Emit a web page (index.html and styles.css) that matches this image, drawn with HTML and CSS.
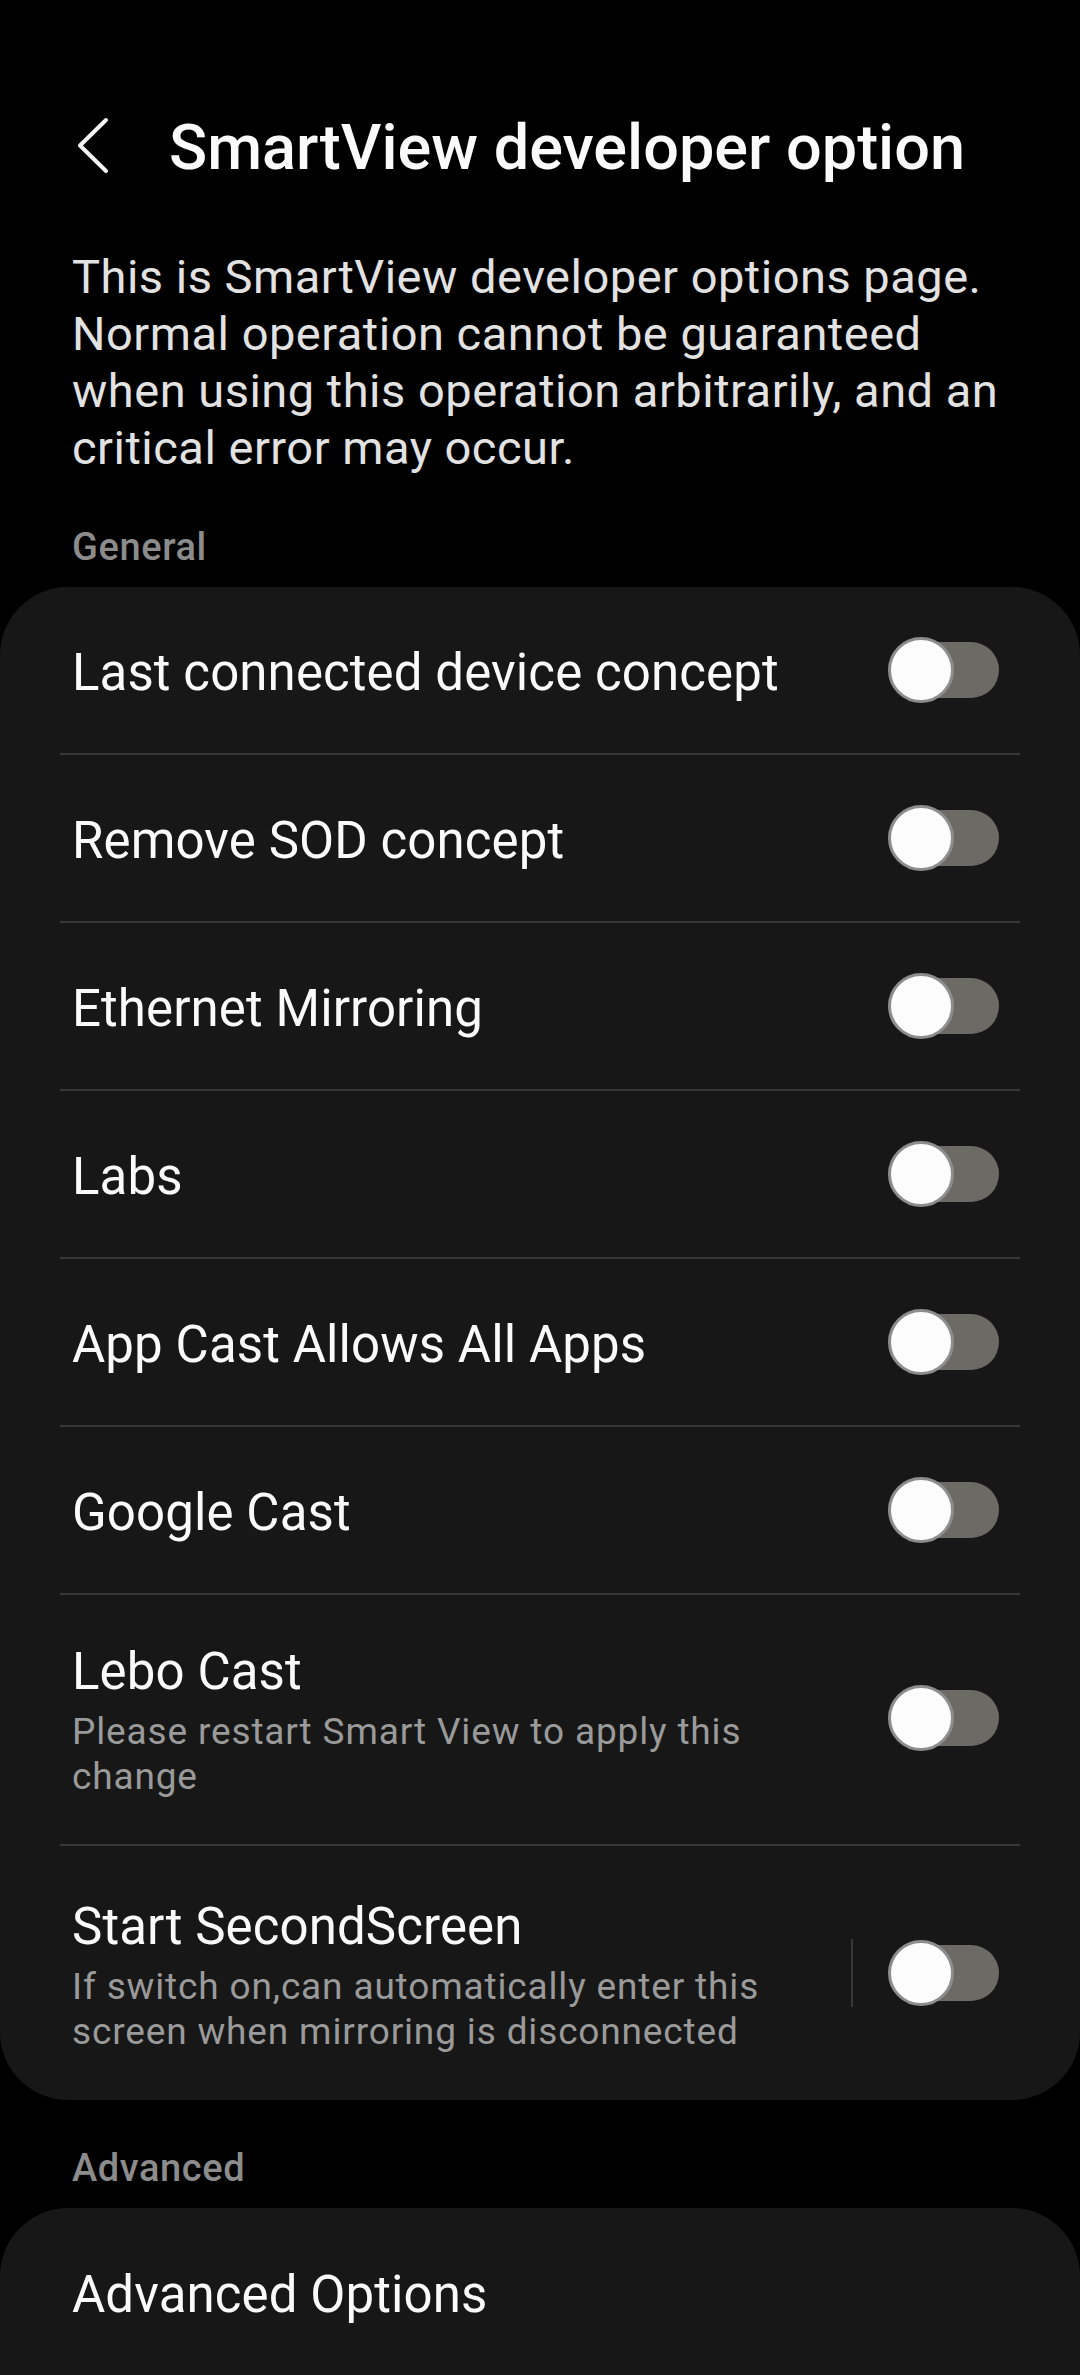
FILE: index.html
```html
<!DOCTYPE html>
<html lang="en">
<head>
<meta charset="utf-8">
<title>SmartView developer option</title>
<link rel="stylesheet" href="styles.css">
</head>
<body>
<header class="appbar">
  <svg class="back" width="34" height="58" viewBox="0 0 34 58" aria-hidden="true">
    <path d="M30 3 L4 28.5 L30 54" fill="none" stroke="#f5f5f5" stroke-width="4" stroke-linecap="round" stroke-linejoin="round"/>
  </svg>
  <h1 class="title">SmartView developer option</h1>
</header>

<p class="desc">This is SmartView developer options page. Normal operation cannot be guaranteed when using this operation arbitrarily, and an critical error may occur.</p>

<h2 class="section">General</h2>
<section class="card">
  <div class="row"><div class="row-text"><div class="row-title">Last connected device concept</div></div><div class="widget"><span class="toggle"><span class="track"></span><span class="thumb"></span></span></div></div>
  <div class="row"><div class="row-text"><div class="row-title">Remove SOD concept</div></div><div class="widget"><span class="toggle"><span class="track"></span><span class="thumb"></span></span></div></div>
  <div class="row"><div class="row-text"><div class="row-title">Ethernet Mirroring</div></div><div class="widget"><span class="toggle"><span class="track"></span><span class="thumb"></span></span></div></div>
  <div class="row"><div class="row-text"><div class="row-title">Labs</div></div><div class="widget"><span class="toggle"><span class="track"></span><span class="thumb"></span></span></div></div>
  <div class="row"><div class="row-text"><div class="row-title">App Cast Allows All Apps</div></div><div class="widget"><span class="toggle"><span class="track"></span><span class="thumb"></span></span></div></div>
  <div class="row"><div class="row-text"><div class="row-title">Google Cast</div></div><div class="widget"><span class="toggle"><span class="track"></span><span class="thumb"></span></span></div></div>
  <div class="row tall"><div class="row-text"><div class="row-title">Lebo Cast</div><div class="row-sub">Please restart Smart View to apply this change</div></div><div class="widget"><span class="toggle"><span class="track"></span><span class="thumb"></span></span></div></div>
  <div class="row tall last"><div class="row-text"><div class="row-title">Start SecondScreen</div><div class="row-sub">If switch on,can automatically enter this screen when mirroring is disconnected</div></div><div class="widget"><span class="vdiv"></span><span class="toggle"><span class="track"></span><span class="thumb"></span></span></div></div>
</section>

<h2 class="section section-next">Advanced</h2>
<section class="card card-open">
  <div class="row last"><div class="row-text"><div class="row-title">Advanced Options</div></div></div>
</section>
</body>
</html>
```

FILE: styles.css
```css
html, body {
  margin: 0;
  padding: 0;
  background: #000;
}
body {
  width: 1080px;
  font-family: Roboto, "Noto Sans", "Liberation Sans", sans-serif;
  color: #fafafa;
  overflow: hidden;
}
.appbar {
  display: flex;
  align-items: center;
  padding: 110px 0 0 76px;
  height: 76px;
}
.back {
  display: block;
  flex: none;
  margin-top: -4px;
}
.title {
  margin: 0 0 0 59px;
  font-size: 63px;
  font-weight: 500;
  line-height: 76px;
  color: #fafafa;
}
.desc {
  margin: 62px 50px 0 72px;
  font-size: 47px;
  line-height: 57px;
  letter-spacing: 0.5px;
  color: #e2e2e2;
}
.section {
  margin: 49px 0 0 72px;
  font-size: 38px;
  font-weight: 500;
  line-height: 45px;
  letter-spacing: 0.6px;
  color: #8c8c8c;
}
.section-next {
  margin-top: 46px;
}
.card {
  margin-top: 17px;
  background: #171717;
  border-radius: 68px;
}
.card-open {
  padding-bottom: 120px;
}
.row {
  display: flex;
  align-items: center;
  margin: 0 60px;
  min-height: 168px;
  padding: 0 21px 0 12px;
  border-bottom: 2px solid #373737;
  box-sizing: border-box;
}
.row.tall {
  padding-top: 41px;
  padding-bottom: 45px;
}
.row.tall.last {
  padding-top: 45px;
  padding-bottom: 46px;
}
.row.last {
  border-bottom: none;
}
.row-text {
  flex: 1;
  min-width: 0;
  padding: 6px 30px 0 0;
}
.row-title {
  font-size: 51px;
  line-height: 60px;
  letter-spacing: 0.1px;
  color: #fafafa;
}
.row-sub {
  margin-top: 7px;
  font-size: 37px;
  line-height: 45px;
  letter-spacing: 0.85px;
  color: #9a9a9a;
}
.widget {
  flex: none;
  width: 148px;
  display: flex;
  align-items: center;
  justify-content: flex-end;
}
.vdiv {
  width: 2px;
  height: 68px;
  background: #383838;
  margin-right: 35px;
}
.toggle {
  position: relative;
  display: block;
  width: 111px;
  height: 66px;
}
.track {
  position: absolute;
  right: 0;
  top: 5px;
  width: 100px;
  height: 56px;
  border-radius: 28px;
  background: #6b6a65;
}
.thumb {
  position: absolute;
  left: 0;
  top: 0;
  width: 66px;
  height: 66px;
  box-sizing: border-box;
  border-radius: 50%;
  background: #fcfcfc;
  border: 3.5px solid #8d8d8d;
}
```
